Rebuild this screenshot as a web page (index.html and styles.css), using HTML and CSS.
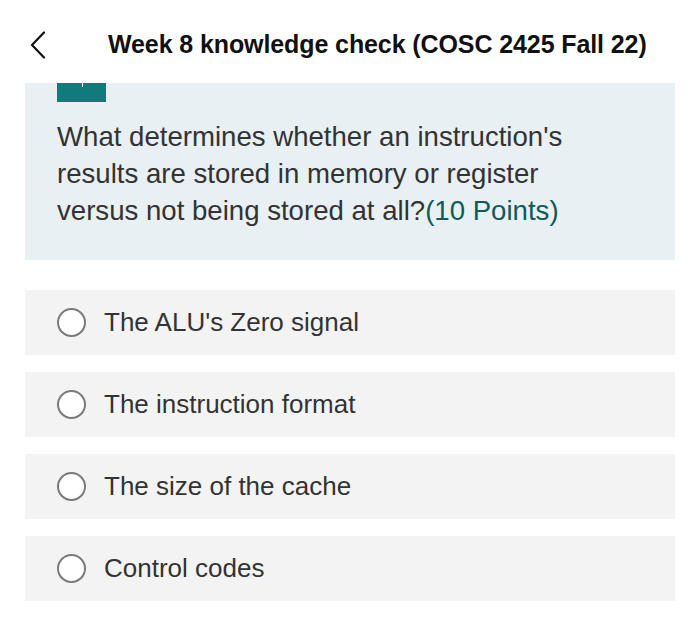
FILE: index.html
```html
<!DOCTYPE html>
<html lang="en">
<head>
    <meta charset="UTF-8">
    <meta name="viewport" content="width=device-width, initial-scale=1.0">
    <title>Week 8 knowledge check</title>
    <link rel="stylesheet" href="styles.css">
</head>
<body>
    <div class="header">
        <svg class="back" width="16" height="28" viewBox="0 0 16 28">
            <path d="M14 1.5 L2 14 L14 26.5" fill="none" stroke="#111" stroke-width="2.2" stroke-linecap="round" stroke-linejoin="round"/>
        </svg>
        <div class="title">Week 8 knowledge check (COSC 2425 Fall 22)</div>
    </div>
    <div class="question">
        <div class="number"><span class="tick"></span></div>
        <p class="question-text">What determines whether an instruction's results are stored in memory or register versus not being stored at all?<span class="points">(10 Points)</span></p>
    </div>
    <div class="options">
        <div class="option"><span class="radio"></span><span>The ALU's Zero signal</span></div>
        <div class="option"><span class="radio"></span><span>The instruction format</span></div>
        <div class="option"><span class="radio"></span><span>The size of the cache</span></div>
        <div class="option"><span class="radio"></span><span>Control codes</span></div>
    </div>
</body>
</html>
```

FILE: styles.css
```css
body {
    margin: 0;
    padding: 0;
    background-color: #fff;
    font-family: "Liberation Sans", Arial, sans-serif;
    color: #333;
}
.header {
    display: flex;
    align-items: center;
    height: 83px;
    padding-left: 30px;
    box-sizing: border-box;
}
.back {
    display: block;
    margin-top: 6px;
}
.title {
    margin-left: 62px;
    margin-top: 5px;
    font-size: 25px;
    font-weight: 600;
    color: #111;
    letter-spacing: -0.1px;
}
.question {
    margin: 0 25px;
    background-color: #e8f0f4;
    padding: 0 32px;
    height: 177px;
    box-sizing: border-box;
}
.number {
    width: 49px;
    height: 19px;
    background-color: #0f7b7b;
    position: relative;
}
.tick {
    position: absolute;
    left: 25px;
    top: 0;
    width: 1px;
    height: 4px;
    background-color: #fff;
}
.question-text {
    margin: 16px 0 0;
    font-size: 27.6px;
    line-height: 37px;
    color: #333;
    max-width: 530px;
}
.points {
    color: #0f5a5a;
}
.options {
    display: flex;
    flex-direction: column;
    gap: 17px;
    margin: 30px 25px 0;
}
.option {
    display: flex;
    align-items: center;
    height: 65px;
    background-color: #f3f3f3;
    padding-left: 32px;
    font-size: 26px;
    color: #333;
}
.radio {
    width: 25px;
    height: 25px;
    border: 2px solid #7a7a7a;
    border-radius: 50%;
    background-color: #fff;
    margin-right: 18px;
    flex-shrink: 0;
}
```
